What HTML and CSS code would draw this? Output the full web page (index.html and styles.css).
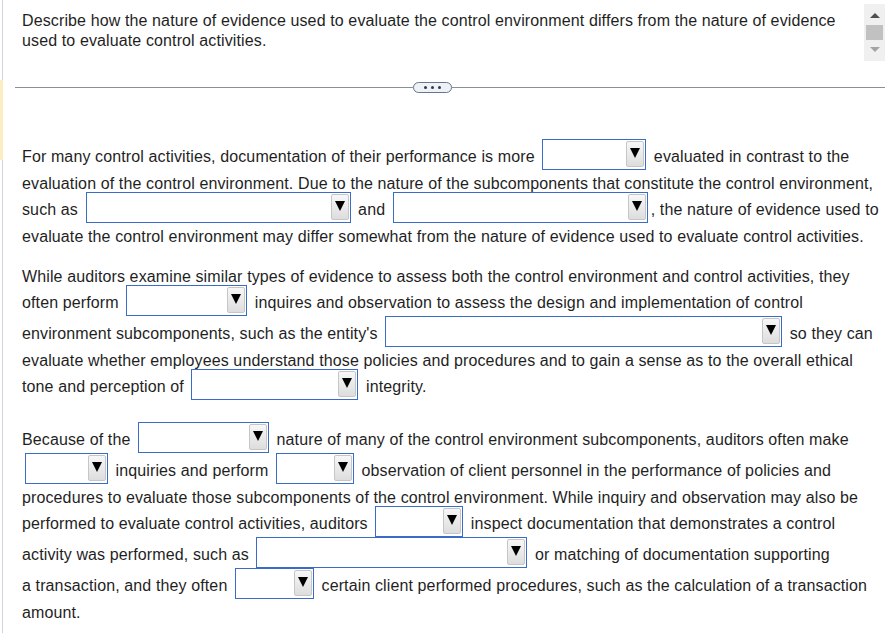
FILE: index.html
```html
<!DOCTYPE html>
<html lang="en">
<head>
  <meta charset="UTF-8"/>
  <title>Control Environment Evidence</title>
  <link rel="stylesheet" href="styles.css">
</head>
<body>
  <div class="question">
    <span class="marker"></span>

    <div class="prompt">
      <p class="prompt-text">Describe how the nature of evidence used to evaluate the control environment differs from the nature of evidence used to evaluate control activities.</p>
      <div class="scrollbar">
        <span class="sb-up"></span>
        <span class="sb-thumb"></span>
        <span class="sb-down"></span>
      </div>
    </div>

    <div class="divider">
      <span class="rule rule-left"></span>
      <button class="more"><i></i><i></i><i></i></button>
      <span class="rule rule-right"></span>
    </div>

    <div class="answer">
      <div class="para">
        <div class="line">For many control activities, documentation of their performance is more <span class="dd w104"><span class="dd-btn"></span></span> evaluated in contrast to the</div>
        <div class="line">evaluation of the control environment. Due to the nature of the subcomponents that constitute the control environment,</div>
        <div class="line">such as <span class="dd w265"><span class="dd-btn"></span></span> and <span class="dd w255"><span class="dd-btn"></span></span>, the nature of evidence used to</div>
        <div class="line">evaluate the control environment may differ somewhat from the nature of evidence used to evaluate control activities.</div>
      </div>

      <div class="para">
        <div class="line">While auditors examine similar types of evidence to assess both the control environment and control activities, they</div>
        <div class="line">often perform <span class="dd w121"><span class="dd-btn"></span></span> inquires and observation to assess the design and implementation of control</div>
        <div class="line">environment subcomponents, such as the entity's <span class="dd w397"><span class="dd-btn"></span></span> so they can</div>
        <div class="line">evaluate whether employees understand those policies and procedures and to gain a sense as to the overall ethical</div>
        <div class="line">tone and perception of <span class="dd w167"><span class="dd-btn"></span></span> integrity.</div>
      </div>

      <div class="para">
        <div class="line">Because of the <span class="dd w131"><span class="dd-btn"></span></span> nature of many of the control environment subcomponents, auditors often make</div>
        <div class="line"><span class="dd w83"><span class="dd-btn"></span></span> inquiries and perform <span class="dd w78"><span class="dd-btn"></span></span> observation of client personnel in the performance of policies and</div>
        <div class="line">procedures to evaluate those subcomponents of the control environment. While inquiry and observation may also be</div>
        <div class="line">performed to evaluate control activities, auditors <span class="dd w88"><span class="dd-btn"></span></span> inspect documentation that demonstrates a control</div>
        <div class="line">activity was performed, such as <span class="dd w271"><span class="dd-btn"></span></span> or matching of documentation supporting</div>
        <div class="line">a transaction, and they often <span class="dd w79"><span class="dd-btn"></span></span> certain client performed procedures, such as the calculation of a transaction</div>
        <div class="line">amount.</div>
      </div>
    </div>
  </div>
</body>
</html>
```

FILE: styles.css
```css
:root {
  --text: #1f1f1f;
  --edge: #cdd5e3;
  --rule: #8a9098;
  --dd-border: #3a6bc9;
}

* {
  box-sizing: border-box;
  margin: 0;
  padding: 0;
}

body {
  font-family: 'Liberation Sans', Arial, sans-serif;
  font-size: 16px;
  letter-spacing: 0.12px;
  color: var(--text);
  background: #fff;
}

.question {
  position: relative;
  margin-left: 2px;
  min-height: 633px;
  border-left: 1px solid var(--edge);
}

.marker {
  position: absolute;
  left: -3px;
  top: 80px;
  width: 3px;
  height: 80px;
  background: #fbeec2;
}

/* prompt + fake scrollbar */
.prompt {
  display: flex;
  justify-content: space-between;
  align-items: flex-start;
}

.prompt-text {
  padding: 11px 0 0 19px;
  line-height: 20px;
  max-width: 859px;
}

.scrollbar {
  display: flex;
  flex-direction: column;
  align-items: center;
  width: 21px;
  height: 57px;
  margin: 4px 6px 0 0;
  padding-top: 9px;
  background: #f0f0f0;
}

.sb-up {
  width: 0;
  height: 0;
  border-left: 5px solid transparent;
  border-right: 5px solid transparent;
  border-bottom: 5px solid #505050;
}

.sb-thumb {
  width: 17px;
  height: 15px;
  margin: 7px 0;
  background: #c1c1c1;
}

.sb-down {
  width: 0;
  height: 0;
  border-left: 5px solid transparent;
  border-right: 5px solid transparent;
  border-top: 5px solid #a3a3a3;
}

/* divider with "more" pill */
.divider {
  display: flex;
  align-items: center;
  margin: 20px 6px 0 12px;
  height: 12px;
}

.rule {
  height: 1px;
  background: var(--rule);
}

.rule-left {
  flex: 398;
}

.rule-right {
  flex: 433;
}

.more {
  display: flex;
  align-items: center;
  justify-content: center;
  gap: 4px;
  width: 39px;
  height: 11px;
  border: 1px solid #66768c;
  border-radius: 6px;
  background: #eef1f5;
}

.more i {
  width: 3px;
  height: 3px;
  border-radius: 50%;
  background: #2c3a4e;
}

/* answer paragraphs */
.answer {
  padding: 49px 0 0 19px;
}

.para {
  margin-bottom: 18px;
}

.para + .para {
  margin-bottom: 22px;
}

.line {
  line-height: 22px;
  white-space: nowrap;
}

.dd {
  display: inline-flex;
  justify-content: flex-end;
  align-items: flex-start;
  vertical-align: middle;
  height: 31px;
  margin: -3px 3px 3px;
  padding: 1px 1px 0 0;
  border: 1px solid var(--dd-border);
  background: #fff;
}

.dd-btn {
  display: flex;
  align-items: center;
  justify-content: center;
  width: 18px;
  height: 26px;
  border: 1px solid #c6c6c6;
  border-radius: 2px;
  background: linear-gradient(#f7f7f7, #dddddd);
}

.dd-btn::after {
  content: '';
  width: 0;
  height: 0;
  margin-top: -2px;
  border-left: 5px solid transparent;
  border-right: 5px solid transparent;
  border-top: 10px solid #000;
}

.w78 { width: 78px; }
.w79 { width: 79px; }
.w83 { width: 83px; }
.w88 { width: 88px; }
.w104 { width: 104px; }
.w121 { width: 121px; }
.w131 { width: 131px; }
.w167 { width: 167px; }
.w255 { width: 255px; }
.w265 { width: 265px; }
.w271 { width: 271px; }
.w397 { width: 397px; }
```
